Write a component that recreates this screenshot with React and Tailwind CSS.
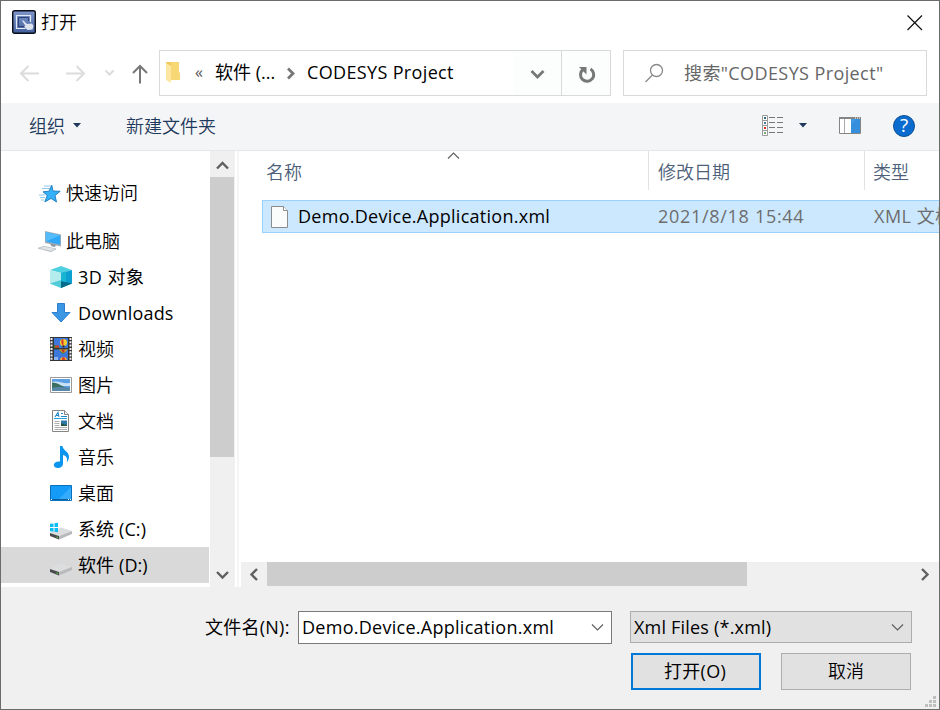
import React from 'react';

const StarIcon = () => (
  <svg width="24" height="24" viewBox="0 0 24 24">
    <path d="M6 5h7M4 7.500h8M1 14h6M2 16.500h5M3 19h3" stroke="#8fc9ee" strokeWidth="1" />
    <path
      d="M13.800 4.300l1.200 5.700 7.200.3-5.200 4.200 1.500 6.500-5.400-3.600-6.300 3.500 2.400-6.500-4.200-3.600 6-.6z"
      fill="#36b0f8"
      stroke="#1a78bd"
      strokeWidth=".9"
    />
  </svg>
);

const ComputerIcon = () => (
  <svg width="24" height="24" viewBox="0 0 24 24">
    <path d="M7 2l16 3.500v12L7 14z" fill="#a3acb3" />
    <path d="M7.800 3l14.400 3.200v9.600L7.800 12.500z" fill="#2fa8f7" />
    <path d="M7.800 3l14.400 3.200L8 12.500z" fill="#55bcfb" />
    <path d="M12 15.500l2-.8 4 1-1 2.300-3-.5z" fill="#8f9aa3" />
    <path d="M0 19.200l6-1.900 12 2.600-5 2.800z" fill="#ccd3d8" stroke="#a6afb6" strokeWidth=".6" />
    <path d="M3 18.800l11 2.500M5 18.200l11 2.200" stroke="#f4f6f7" strokeWidth=".6" />
  </svg>
);

const CubeIcon = () => (
  <svg width="24" height="24" viewBox="0 0 24 24">
    <path d="M1 5l11-4 11 4-11 3z" fill="#4fd0e0" />
    <path d="M1 5l11 3v15L1 18.500z" fill="#b5ecee" />
    <path d="M23 5L12 8v15l11-4.500z" fill="#0c9fcf" />
    <path d="M12 16l11 2.500L12 23z" fill="#056a87" />
    <path d="M1 18.500L12 15v8z" fill="#52cbd8" />
    <path d="M12 8l5-1.500v10.800L12 16z" fill="#18b5d3" />
  </svg>
);

const DownloadIcon = () => (
  <svg width="24" height="24" viewBox="0 0 24 24">
    <path d="M8.500 2.500h7v9H21l-9 9.500-9-9.500h5.500z" fill="#3b97e4" stroke="#2a7fcf" strokeWidth="1" />
  </svg>
);

const VideoIcon = () => (
  <svg width="24" height="24" viewBox="0 0 24 24">
    <path d="M1 0h22v24H1z" fill="#353535" />
    <path d="M2.500 1v22M21.500 1v22" stroke="#f2f2f2" strokeWidth="2" strokeDasharray="2 1.300" />
    <path d="M5 1h14v10H5zM5 12.500h14V23H5z" fill="#3c78dc" />
    <path d="M5 8c3 0 4 1 6 3H5zM10 12.500h8l-3 4-2 0z" fill="#3d8431" />
    <circle cx="14.500" cy="5.500" r="3.600" fill="#f6cf2e" />
    <path d="M14.500 2c-3 0-3 5 0 7z" fill="#d73a2c" />
    <path d="M13.500 8.500h2v2h-2z" fill="#3a2317" />
    <path d="M6 8.500h4v2H6z" fill="#d73a2c" />
    <path d="M10 12.500h9l-3.500 3h-2z" fill="#d8a42c" />
    <path d="M12 12.500h4l-1 3h-1z" fill="#c23327" />
    <path d="M11 23c0-4 7-4 7 0z" fill="#f6a92e" />
    <path d="M13 23c0-4 3-4 3 0z" fill="#d73a2c" />
    <path d="M5 20h4v3H5z" fill="#8db5ec" />
  </svg>
);

const PictureIcon = () => (
  <svg width="24" height="24" viewBox="0 0 24 24">
    <path d="M1.500 4.500h21v15h-21z" fill="#fff" stroke="#9a9a9a" />
    <path d="M3 6h18v12H3z" fill="#5c9fe2" />
    <path d="M3 9c5-2 10 2 18 1v3H3z" fill="#c9e2f6" />
    <path d="M3 9.500c5 0 9 3 14 5.500H3z" fill="#3c6f60" />
    <path d="M3 15c5-1.500 12-1 18-.5V18H3z" fill="#5888a8" />
  </svg>
);

const DocumentIcon = () => (
  <svg width="24" height="24" viewBox="0 0 24 24">
    <path d="M3.500 1.500h12l4 4v17h-16z" fill="#fff" stroke="#858585" />
    <path d="M15.500 1.500v4h4" fill="#eee" stroke="#858585" />
    <path d="M6 8l3-4.500L10 8M7.500 6.500h2.500M12 4.500h2M12 7.500h6" stroke="#1f86c8" strokeWidth="1.100" fill="none" />
    <path d="M5 9.500h13" stroke="#27a0dd" />
    <path d="M5.500 12.500h5M5.500 14.500h5M5.500 16.500h5M5.500 18.500h12.500M5.500 20.500h12.500" stroke="#a5a5a5" strokeWidth=".9" />
    <path d="M12 11.500h6V17h-6z" fill="#2e78a8" />
    <path d="M12 17v-3l3 1.500 3 .5v1z" fill="#255339" />
  </svg>
);

const MusicIcon = () => (
  <svg width="24" height="24" viewBox="0 0 24 24">
    <path
      d="M11 1h2.500c.3 4.500 6.700 5.500 6.500 11-.1 2.300-1 4-2.200 5.500.8-3.500.2-6.500-3.800-7.500v8.500c0 2.800-2.300 4.500-5 4.500-2.400 0-4.200-1-4.200-3 0-2.300 2.700-4 6.200-3.500z"
      fill="#0a95ee"
    />
  </svg>
);

const DesktopIcon = () => (
  <svg width="24" height="24" viewBox="0 0 24 24">
    <path d="M1.500 4.500h21v15h-21z" fill="#149bf8" stroke="#0a70bb" />
    <path d="M10 18L22 6v12z" fill="#35acfb" />
    <path d="M2 18.500h20" stroke="#0b629f" />
    <path d="M2 18.500h1M19 18.500h1M21 18.500h1" stroke="#fff" />
  </svg>
);

const Drive = () => (
  <>
    <path d="M1 16l11-5.500 11 3.500-13 5z" fill="#dcddde" />
    <path d="M10 19l13-5v3l-13 5.500z" fill="#b9babc" />
    <path d="M1 16l9 3v3.500l-9-3.500z" fill="#4a4b4c" />
    <path d="M7.500 20l1.500.5" stroke="#44d044" strokeWidth="1.200" />
  </>
);

const SystemDriveIcon = () => (
  <svg width="24" height="24" viewBox="0 0 24 24">
    <Drive />
    <path d="M1 6.800l3.500-.4v3.600H1zM5.500 6.200L9 5.800v4.200H5.500zM1 11h3.500v3.700L1 14.300zM5.500 11H9v4.200l-3.500-.4z" fill="#0bbcf2" />
  </svg>
);

const DriveIcon = () => (
  <svg width="24" height="24" viewBox="0 0 24 24">
    <Drive />
  </svg>
);

const AppIcon = () => (
  <svg width="24" height="24" viewBox="0 0 24 24">
    <defs>
      <linearGradient id="app" x1="0" y1="0" x2="0" y2="1">
        <stop offset="0" stopColor="#7f97cc" />
        <stop offset="1" stopColor="#425f9d" />
      </linearGradient>
    </defs>
    <rect x=".7" y=".7" width="22.600" height="22.600" rx="1.800" fill="url(#app)" stroke="#0a0d18" strokeWidth="1.400" />
    <path d="M18.500 12V5.500h-14V18.500h9" fill="none" stroke="#e3e9f5" strokeWidth="1.200" />
    <path d="M16.500 11V7.500h-10V16.500h6" fill="none" stroke="#2c4275" strokeWidth="1" />
    <path d="M10 10.500l1.500 0 3.500 3.500 5-.5 1.500 2.500-1 3.500-5 .5-3.500-3.500 1.500-.5z" fill="#dce3ee" />
  </svg>
);

const FolderIcon = () => (
  <svg width="14" height="22" viewBox="0 0 14 22">
    <path d="M0 0h13v10l1 1v7H5z" fill="#f8d775" />
    <path d="M0 0h5v18H2z" fill="#f0c95f" />
    <path d="M0 1l5 3v17l-5-3z" fill="#fde6a2" />
  </svg>
);

const FileIcon = () => (
  <svg width="17" height="22" viewBox="0 0 17 22">
    <path d="M.5.500h12l4 4v17H.5z" fill="#fafcfc" stroke="#8c8c8c" />
    <path d="M12.500.5v4h4" fill="#fff" stroke="#8c8c8c" />
  </svg>
);

const ViewIcon = () => (
  <svg width="22" height="22" viewBox="0 0 22 22">
    <path d="M.5.500h5v20h-5zM.5 5.500h5M.5 10.500h5M.5 15.500h5" fill="#fff" stroke="#9a9a9a" />
    <path d="M2 2h2v2H2z" fill="#286c85" />
    <path d="M2 7h2v2H2z" fill="#5676a6" />
    <path d="M2 12h2v2H2z" fill="#d5291a" />
    <path d="M2 17h2v2H2z" fill="#80a469" />
    <path d="M7 2.500h6M15 2.500h6M7 7.500h6M15 7.500h6M7 12.500h6M15 12.500h6M7 17.500h6M15 17.500h6" stroke="#777" />
  </svg>
);

const PaneIcon = () => (
  <svg width="22" height="17" viewBox="0 0 22 17">
    <path d="M.5.500h21v16H.5z" fill="#fff" stroke="#858585" />
    <path d="M0 1h22" stroke="#858585" strokeWidth="2" />
    <path d="M16 1h1M18 1h1M20 1h1" stroke="#fff" />
    <path d="M5.500 2v14" stroke="#aaa" />
    <path d="M12 2h9v14h-9z" fill="#3f9ae6" />
    <path d="M12 16V8l5-6h4v14z" fill="#368fdd" />
  </svg>
);

const Chevron = ({ d, w = 12, h = 12, color = '#606060', stroke = 2.4 }) => (
  <svg width={w} height={h} viewBox={`0 0 ${w} ${h}`} fill="none" className="shrink-0">
    <path d={d} stroke={color} strokeWidth={stroke} />
  </svg>
);

const treeItems = [
  { label: '3D 对象', icon: CubeIcon, className: 'tracking-[0.5px]' },
  { label: 'Downloads', icon: DownloadIcon, className: 'tracking-[0.2px]' },
  { label: '视频', icon: VideoIcon, className: 'font-[350]' },
  { label: '图片', icon: PictureIcon, className: 'font-[350]' },
  { label: '文档', icon: DocumentIcon, className: 'font-[350]' },
  { label: '音乐', icon: MusicIcon, className: 'font-[350]' },
  { label: '桌面', icon: DesktopIcon, className: 'font-[350]' },
  { label: '系统 (C:)', icon: SystemDriveIcon, className: 'tracking-[0.1px]' },
  { label: '软件 (D:)', icon: DriveIcon, className: 'tracking-[0.1px]', selected: true },
];

const TitleBar = () => (
  <div className="flex h-[49px] shrink-0 items-start pl-[11px] pr-[16px] pt-[9px]">
    <AppIcon />
    <span className="ml-[5px] font-[350] leading-6">打开</span>
    <button className="ml-auto mt-[5px]">
      <Chevron d="M.5.5l14.500 14.500M15 .5L.5 15" w={16} h={16} color="#111" stroke={1.2} />
    </button>
  </div>
);

const AddressBar = () => (
  <div className="flex h-[53px] shrink-0 items-start">
    <div className="flex h-[46px] w-[158px] items-center">
      <svg width="158" height="46" viewBox="0 0 158 46" fill="none">
        <path d="M38 23.500H20M27.500 16l-7.500 7.500 7.500 7.500M65 23.500h18M75.500 16l7.500 7.500-7.500 7.500" stroke="#dcdcdc" strokeWidth="2" />
        <path d="M104.500 20.500l4 4 4-4" stroke="#dcdcdc" strokeWidth="2" />
        <path d="M139 33.500V16M132 23l7-7 7 7" stroke="#777" strokeWidth="2" />
      </svg>
    </div>
    <div className="flex h-[46px] w-[452px] border border-[#d9d9d9]">
      <div className="flex w-[353px] items-center pl-[6px]">
        <FolderIcon />
        <span className="ml-[15px] w-[10px] pb-[3px] text-[16px] text-[#555]">«</span>
        <span className="ml-[10px] w-[64px] whitespace-nowrap pb-[2px]">软件 (...</span>
        <span className="ml-[7px] w-[21px] pt-[1px]">
          <Chevron d="M2 1.500l5 5-5 5" w={10} h={13} color="#777" stroke={2.8} />
        </span>
        <span className="whitespace-nowrap pb-[2px] tracking-[0.35px]">CODESYS Project</span>
      </div>
      <div className="flex w-[48px] items-center justify-center bg-[#fcfdfd] pl-px pt-[3px]">
        <Chevron d="M1.500 2l6 6 6-6" w={15} h={11} color="#777" stroke={2.8} />
      </div>
      <div className="flex flex-1 items-center justify-center border-l border-[#d9d9d9] bg-[#fcfdfd] pl-px pt-[3px]">
        <svg width="18" height="18" viewBox="0 0 18 18" fill="none">
          <path d="M12.500 3a6.600 6.600 0 1 1-7.500.5" stroke="#777" strokeWidth="3" />
          <path d="M1 1h7.500v7.500z" fill="#777" />
        </svg>
      </div>
    </div>
    <div className="ml-3 flex h-[46px] w-[304px] items-center border border-[#d9d9d9] pl-[20px] text-[#666]">
      <svg width="20" height="20" viewBox="0 0 20 20" fill="none" stroke="#888" strokeWidth="1.300">
        <circle cx="12.500" cy="7.500" r="6" />
        <path d="M8.500 12l-7 7" />
      </svg>
      <span className="ml-[20px] whitespace-nowrap tracking-[0.4px]">搜索"CODESYS Project"</span>
    </div>
  </div>
);

const Toolbar = () => (
  <div className="flex h-[48px] shrink-0 items-center border-b border-[#e6e7e8] bg-[#f4f5f7] pb-[2px] pl-[28px] pr-[24px] text-[#1e395b]">
    <span className="font-[350]">组织</span>
    <svg width="8" height="5" viewBox="0 0 8 5" className="ml-[8px]">
      <path d="M0 0h8L4 4.500z" fill="#1e395b" />
    </svg>
    <span className="ml-[45px] font-[350]">新建文件夹</span>
    <div className="ml-auto flex items-center">
      <ViewIcon />
      <svg width="8" height="5" viewBox="0 0 8 5" className="ml-[15px]">
        <path d="M0 0h8L4 4.500z" fill="#1e395b" />
      </svg>
      <span className="ml-[32px]">
        <PaneIcon />
      </span>
      <span className="ml-[32px] flex h-[22px] w-[22px] items-center justify-center rounded-full border border-[#0a4f94] bg-[#0a6cce] text-[19px] leading-none text-white">
        ?
      </span>
    </div>
  </div>
);

const NavTree = () => (
  <div className="flex w-[234px] shrink-0">
    <nav className="w-[208px] pt-[24px]">
      <div className="flex h-[36px] items-center pl-[37px]">
        <StarIcon />
        <span className="ml-[4px] font-[350]">快速访问</span>
      </div>
      <div className="mt-3 flex h-[36px] items-center pl-[37px]">
        <ComputerIcon />
        <span className="ml-[4px] font-[350]">此电脑</span>
      </div>
      {treeItems.map(({ label, icon: Icon, className = '', selected }) => (
        <div key={label} className={`flex h-[36px] items-center pl-[48px] ${selected ? 'bg-[#d9d9d9]' : ''}`}>
          <Icon />
          <span className={`ml-[5px] whitespace-nowrap ${className}`}>{label}</span>
        </div>
      ))}
    </nav>
    <div className="ml-px flex w-[25px] flex-col bg-[#f0f0f0]">
      <div className="flex h-[26px] items-center justify-center pt-[4px]">
        <Chevron d="M1 7.500l5.500-5.500L12 7.500" w={13} h={10} />
      </div>
      <div className="h-[280px] w-[24px] bg-[#cdcdcd]" />
      <div className="mt-auto flex h-[25px] items-center justify-center">
        <Chevron d="M1 2l5.500 5.500L12 2" w={13} h={10} />
      </div>
    </div>
  </div>
);

const FileList = () => (
  <div className="flex min-w-0 flex-1 flex-col overflow-hidden">
    <div className="flex h-[39px] font-[350] text-[#4c607a]">
      <div className="relative w-[407px] pl-[25px] pt-[8px]">
        名称
        <span className="absolute left-[206px] top-[1px]">
          <Chevron d="M1 6.500l5.500-5.500L12 6.500" w={13} h={8} stroke={1.2} />
        </span>
      </div>
      <div className="w-[216px] border-l border-[#e2e2e2] pl-[9px] pt-[8px]">修改日期</div>
      <div className="flex-1 border-l border-[#e2e2e2] pl-[8px] pt-[8px]">类型</div>
    </div>
    <div className="ml-[21px] mt-[10px] flex h-[33px] w-[720px] items-center border border-[#99d1ff] bg-[#cce8ff] text-[#6d6d6d]">
      <span className="ml-[8px]">
        <FileIcon />
      </span>
      <span className="ml-[10px] w-[360px] pb-[2px] tracking-[0.27px] text-black">Demo.Device.Application.xml</span>
      <span className="w-[216px] pb-[2px] tracking-[0.7px]">2021/8/18 15:44</span>
      <span className="whitespace-nowrap pb-[2px] tracking-[0.5px]">XML 文档</span>
    </div>
    <div className="mt-auto flex h-[25px] items-start bg-[#f0f0f0]">
      <div className="flex h-[24px] w-[26px] items-center justify-center">
        <Chevron d="M8 1L2.500 6.500 8 12" w={10} h={13} />
      </div>
      <div className="h-[24px] w-[480px] bg-[#cdcdcd]" />
      <div className="ml-auto mr-[9px] flex h-[24px] items-center">
        <Chevron d="M2 1l5.500 5.500L2 12" w={10} h={13} />
      </div>
    </div>
  </div>
);

const Footer = () => (
  <div className="relative flex-1 bg-[#f0f0f0] pt-[24px]">
    <div className="flex items-start">
      <label className="w-[297px] whitespace-nowrap pl-[204px] leading-[32px] tracking-[0.25px]">文件名(N):</label>
      <div className="flex h-[33px] w-[314px] items-center justify-between border border-[#7a7a7a] bg-white pl-[3px] pr-[7px]">
        <span className="pb-[2px] tracking-[0.27px]">Demo.Device.Application.xml</span>
        <Chevron d="M1 1.500l5.500 5.500L12 1.500" w={13} h={9} stroke={1.2} />
      </div>
      <div className="ml-[18px] flex h-[32px] w-[282px] items-center justify-between border border-[#adadad] bg-[#e1e1e1] pl-[3px] pr-[7px]">
        <span className="tracking-[0.2px]">Xml Files (*.xml)</span>
        <Chevron d="M1 1.500l5.500 5.500L12 1.500" w={13} h={9} stroke={1.2} />
      </div>
    </div>
    <div className="mt-[9px] flex gap-5 pl-[630px]">
      <button className="h-[37px] w-[130px] border-2 border-[#0078d7] bg-[#e1e1e1] pb-px pr-[2px] tracking-[0.3px]">打开(O)</button>
      <button className="h-[37px] w-[130px] border border-[#adadad] bg-[#e1e1e1] pb-px font-[350]">取消</button>
    </div>
    <svg width="11" height="11" viewBox="0 0 11 11" className="absolute bottom-[2px] right-[3px]">
      <path d="M8 0h3v3H8zM4 4h3v3H4zM8 4h3v3H8zM0 8h3v3H0zM4 8h3v3H4zM8 8h3v3H8z" fill="#bfbfbf" />
    </svg>
  </div>
);

export default function App() {
  return (
    <div className="flex h-[710px] w-[940px] flex-col overflow-hidden border border-[#6b6b6b] bg-white font-['Open_Sans','Noto_Sans_CJK_SC',sans-serif] text-[18px] leading-[26px] text-black">
      <TitleBar />
      <AddressBar />
      <Toolbar />
      <div className="flex h-[436px] shrink-0">
        <NavTree />
        <div className="ml-[2px] mr-[2px] w-[2px] bg-[#f5f5f5]" />
        <FileList />
      </div>
      <Footer />
    </div>
  );
}
